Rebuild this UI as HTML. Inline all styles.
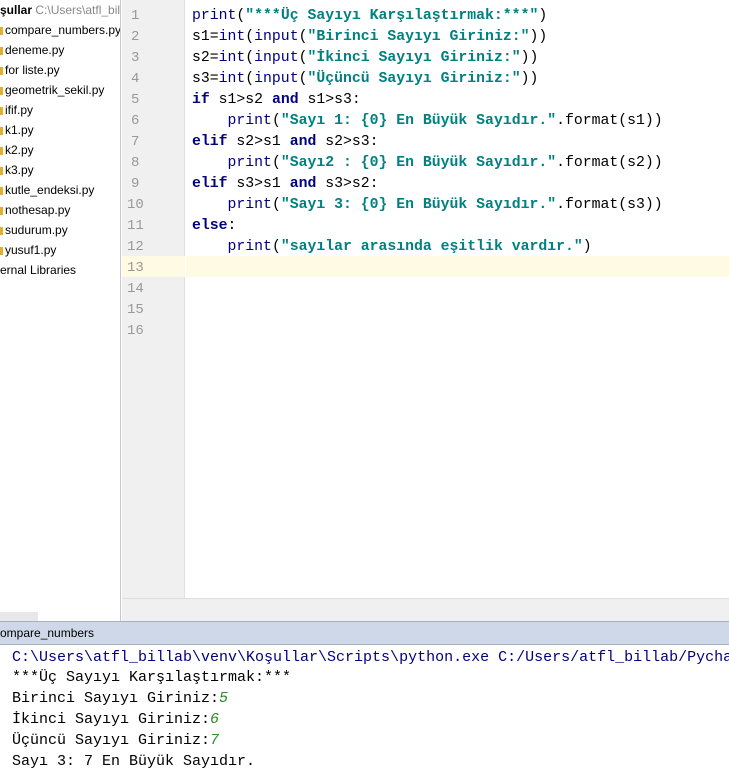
<!DOCTYPE html>
<html><head><meta charset="utf-8"><style>
*{margin:0;padding:0;box-sizing:border-box}
body{width:729px;height:779px;overflow:hidden;background:#fff;position:relative;font-family:"Liberation Sans",sans-serif}
#left{position:absolute;left:0;top:0;width:121px;height:621px;background:#fff;border-right:1px solid #c8c8c8}
#left .row{position:absolute;left:0;height:20px;line-height:20px;font-size:12px;color:#000;white-space:nowrap;overflow:hidden;width:120px}
#left .ic{display:inline-block;width:3px;height:8px;background:#e0b030;margin-right:2px;vertical-align:-1px}
#gutter{position:absolute;left:122px;top:0;width:63px;height:598px;background:#f0f0f0;border-right:1px solid #e0e0e0}
#gutter div{position:absolute;left:0;width:63px;height:21px;line-height:21px;font-family:"Liberation Mono",monospace;font-size:14px;color:#999;padding-left:9px}
#code{position:absolute;left:186px;top:0;width:543px;height:598px}
.ln{position:absolute;left:6px;height:21px;line-height:21px;font-family:"Liberation Mono",monospace;font-size:14.8px;white-space:pre;color:#000}
.k{color:#000080;font-weight:bold}
.s{color:#008080;font-weight:bold}
.b{color:#000080}
#hl{position:absolute;left:186px;top:256px;width:543px;height:21px;background:#fffae3}
#scroll{position:absolute;left:122px;top:598px;width:607px;height:23px;background:#f0f0f0;border-top:1px solid #ddd}
#lbar{position:absolute;left:0;top:612px;width:38px;height:9px;background:#e8e8e8}
#tab{position:absolute;left:0;top:621px;width:729px;height:24px;background:#cfd8e8;border-top:1px solid #a8b0c0;border-bottom:1px solid #a8b0c0;font-size:12px;line-height:22px;padding-left:0}
.c{position:absolute;left:12px;height:21px;line-height:21px;font-family:"Liberation Mono",monospace;font-size:15px;white-space:pre;color:#000}
.g{color:#2a8a2a;font-style:italic}
</style></head><body>
<div id="left">
<div class="row" style="top:0"><b>şullar</b> <span style="color:#888">C:\Users\atfl_billab</span></div>
<div class="row" style="top:20px"><span class="ic"></span>compare_numbers.py</div>
<div class="row" style="top:40px"><span class="ic"></span>deneme.py</div>
<div class="row" style="top:60px"><span class="ic"></span>for liste.py</div>
<div class="row" style="top:80px"><span class="ic"></span>geometrik_sekil.py</div>
<div class="row" style="top:100px"><span class="ic"></span>ifif.py</div>
<div class="row" style="top:120px"><span class="ic"></span>k1.py</div>
<div class="row" style="top:140px"><span class="ic"></span>k2.py</div>
<div class="row" style="top:160px"><span class="ic"></span>k3.py</div>
<div class="row" style="top:180px"><span class="ic"></span>kutle_endeksi.py</div>
<div class="row" style="top:200px"><span class="ic"></span>nothesap.py</div>
<div class="row" style="top:220px"><span class="ic"></span>sudurum.py</div>
<div class="row" style="top:240px"><span class="ic"></span>yusuf1.py</div>
<div class="row" style="top:260px">ernal Libraries</div>
</div>
<div id="gutter">
<div style="top:6px">1</div><div style="top:27px">2</div><div style="top:48px">3</div><div style="top:69px">4</div><div style="top:90px">5</div><div style="top:111px">6</div><div style="top:132px">7</div><div style="top:153px">8</div><div style="top:174px">9</div><div style="top:195px;padding-left:5px">10</div><div style="top:216px;padding-left:5px">11</div><div style="top:237px;padding-left:5px">12</div><div style="top:256px;padding-left:5px;background:#fffae3;line-height:25px">13</div><div style="top:279px;padding-left:5px">14</div><div style="top:300px;padding-left:5px">15</div><div style="top:321px;padding-left:5px">16</div>
</div>
<div id="hl"></div>
<div id="code">
<div class="ln" style="top:6px"><span class="b">print</span>(<span class="s">"***Üç Sayıyı Karşılaştırmak:***"</span>)</div>
<div class="ln" style="top:27px">s1=<span class="b">int</span>(<span class="b">input</span>(<span class="s">"Birinci Sayıyı Giriniz:"</span>))</div>
<div class="ln" style="top:48px">s2=<span class="b">int</span>(<span class="b">input</span>(<span class="s">"İkinci Sayıyı Giriniz:"</span>))</div>
<div class="ln" style="top:69px">s3=<span class="b">int</span>(<span class="b">input</span>(<span class="s">"Üçüncü Sayıyı Giriniz:"</span>))</div>
<div class="ln" style="top:90px"><span class="k">if</span> s1&gt;s2 <span class="k">and</span> s1&gt;s3:</div>
<div class="ln" style="top:111px">    <span class="b">print</span>(<span class="s">"Sayı 1: {0} En Büyük Sayıdır."</span>.format(s1))</div>
<div class="ln" style="top:132px"><span class="k">elif</span> s2&gt;s1 <span class="k">and</span> s2&gt;s3:</div>
<div class="ln" style="top:153px">    <span class="b">print</span>(<span class="s">"Sayı2 : {0} En Büyük Sayıdır."</span>.format(s2))</div>
<div class="ln" style="top:174px"><span class="k">elif</span> s3&gt;s1 <span class="k">and</span> s3&gt;s2:</div>
<div class="ln" style="top:195px">    <span class="b">print</span>(<span class="s">"Sayı 3: {0} En Büyük Sayıdır."</span>.format(s3))</div>
<div class="ln" style="top:216px"><span class="k">else</span>:</div>
<div class="ln" style="top:237px">    <span class="b">print</span>(<span class="s">"sayılar arasında eşitlik vardır."</span>)</div>
</div>
<div id="scroll"></div>
<div id="lbar"></div>
<div id="tab">ompare_numbers</div>
<div class="c" style="top:647px;color:#000080">C:\Users\atfl_billab\venv\Koşullar\Scripts\python.exe C:/Users/atfl_billab/Pycharm</div>
<div class="c" style="top:667px">***Üç Sayıyı Karşılaştırmak:***</div>
<div class="c" style="top:688px">Birinci Sayıyı Giriniz:<span class="g">5</span></div>
<div class="c" style="top:709px">İkinci Sayıyı Giriniz:<span class="g">6</span></div>
<div class="c" style="top:730px">Üçüncü Sayıyı Giriniz:<span class="g">7</span></div>
<div class="c" style="top:751px">Sayı 3: 7 En Büyük Sayıdır.</div>
</body></html>
